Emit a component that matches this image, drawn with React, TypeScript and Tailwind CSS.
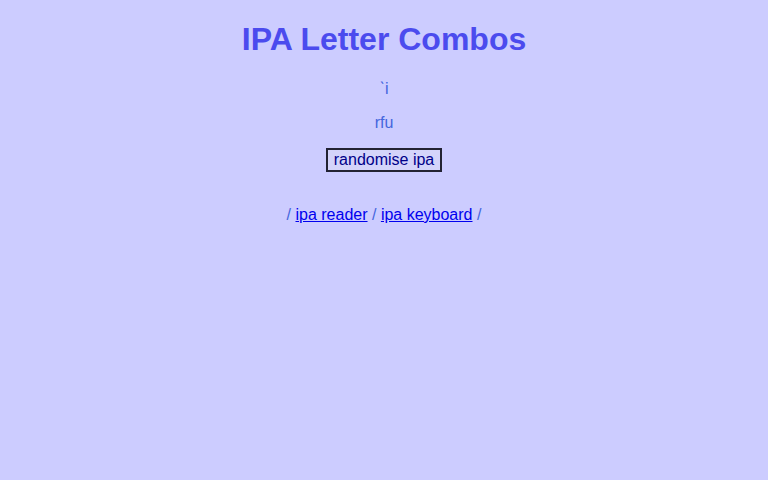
export default function App() {
  return (
    <div className="min-h-[480px] bg-[#ccccff] text-center font-['Liberation_Sans',Arial,sans-serif] text-base text-[#4466dd]">
      <h1 className="pt-[21px] text-[32px] leading-[37px] font-bold text-[#4b4bee]">IPA Letter Combos</h1>
      <p className="mt-[22px] leading-[18px]">ˋi</p>
      <p className="mt-4 leading-[18px]">rfu</p>
      <div className="mt-4">
        <button className="h-6 border-2 border-[#222233] bg-[#d4d4fa] px-[6px] leading-[18px] text-[#000088]">
          randomise ipa
        </button>
      </div>
      <p className="mt-[34px] leading-[18px]">
        / <a href="#" className="text-[#0000ee] underline">ipa reader</a> /{' '}
        <a href="#" className="text-[#0000ee] underline">ipa keyboard</a> /
      </p>
    </div>
  );
}
